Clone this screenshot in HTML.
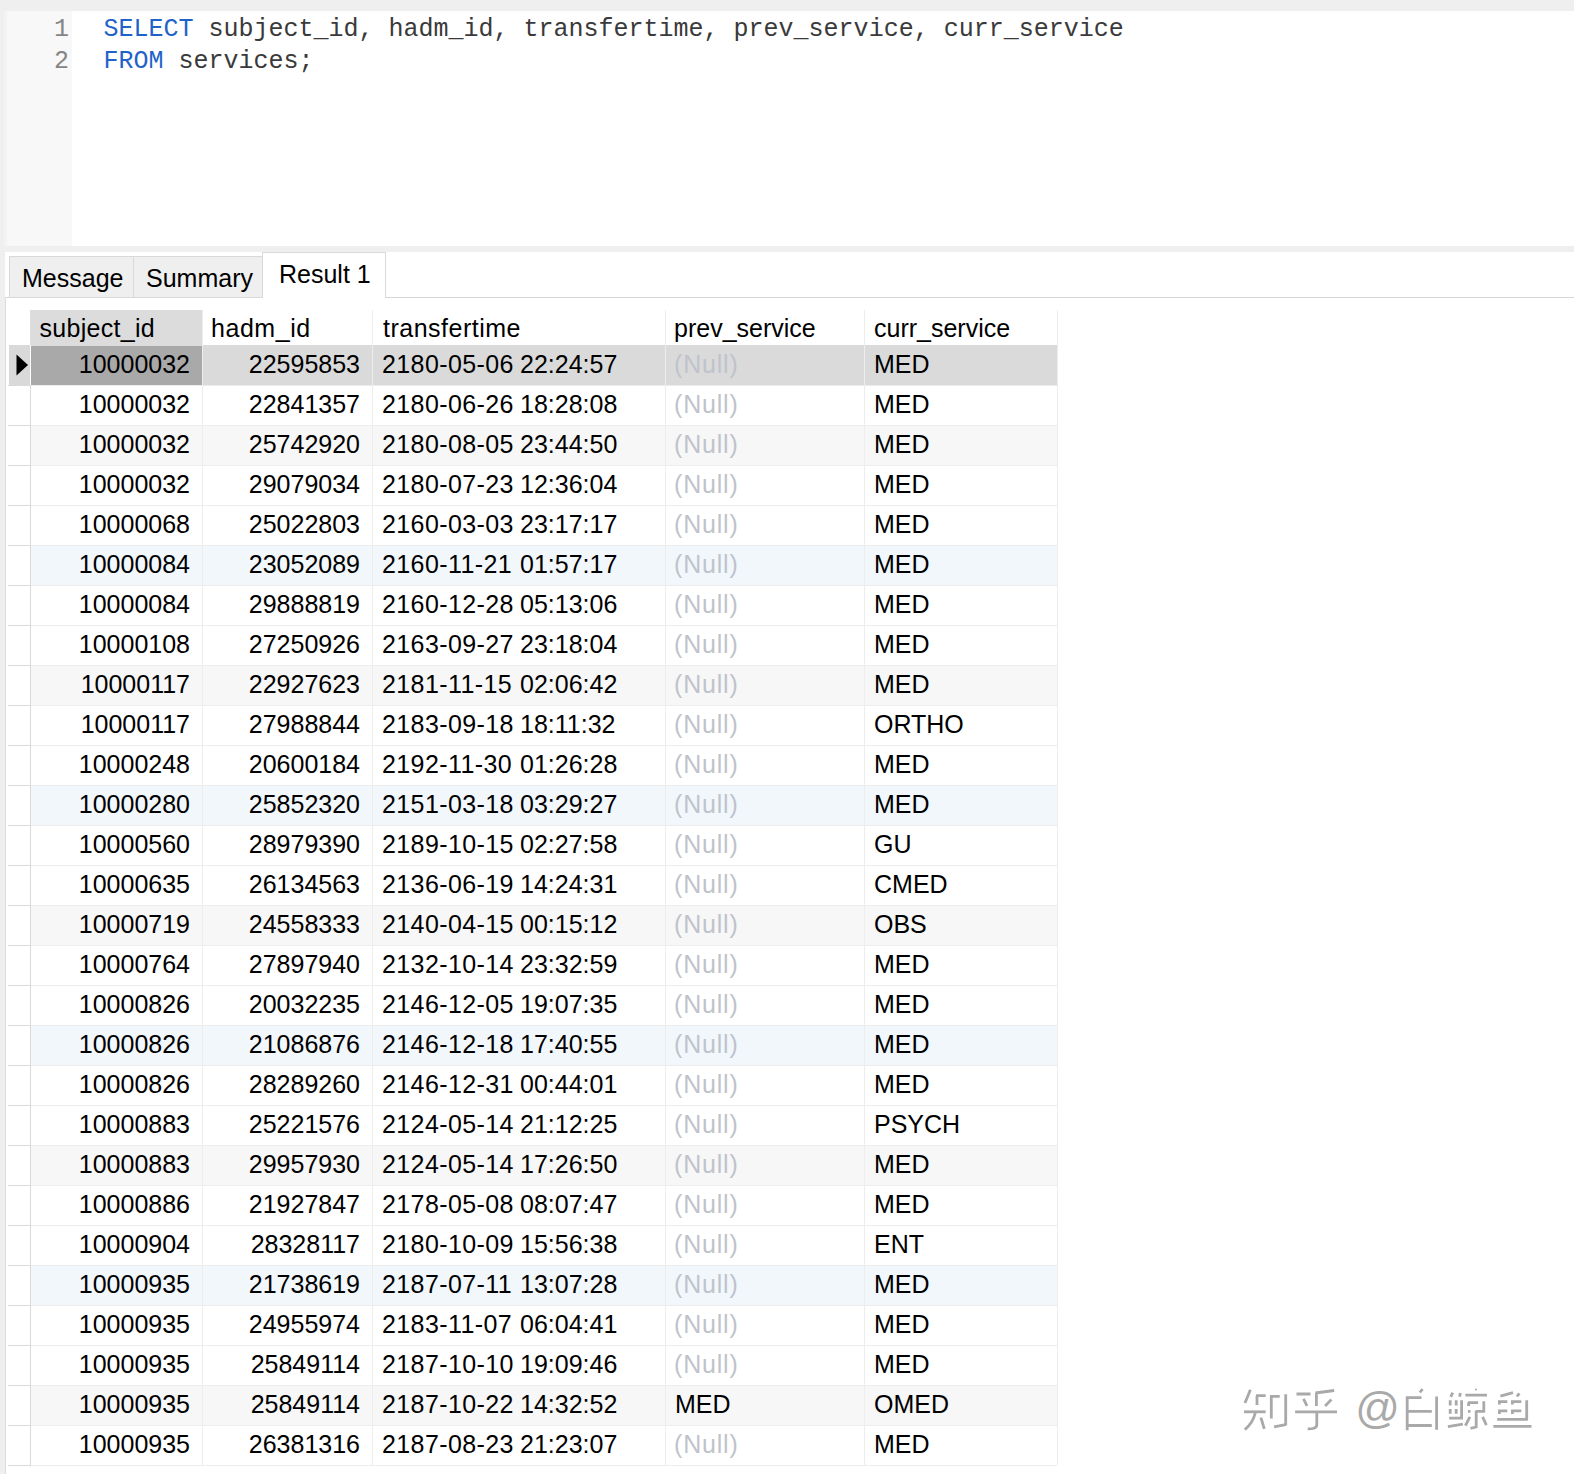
<!DOCTYPE html>
<html><head><meta charset="utf-8"><style>
*{margin:0;padding:0;box-sizing:border-box}
html,body{width:1574px;height:1474px;overflow:hidden;background:#fff}
body{position:relative;font-family:"Liberation Sans",sans-serif;}
.a{position:absolute}
.code{font-family:"Liberation Mono",monospace;font-size:25px;line-height:32px;white-space:pre;color:#3a3a3a}
.kw{color:#1f63c9}
.ln{font-family:"Liberation Mono",monospace;font-size:25px;line-height:32px;color:#858585;text-align:right}
.t{font-size:25px;line-height:40px;white-space:nowrap;color:#000}
.h{font-size:25px;line-height:35px;white-space:nowrap;color:#000}
.tab{font-size:25px;white-space:nowrap;color:#000}
.nul{color:#bfc3cc}
</style></head><body>
<div class="a" style="left:0;top:0;width:1574px;height:11px;background:#efefef"></div><div class="a" style="left:0;top:0;width:5px;height:1474px;background:#efefef"></div><div class="a" style="left:4px;top:11px;width:3px;height:235px;background:#f3f3f3"></div><div class="a" style="left:7px;top:11px;width:65px;height:235px;background:#f8f8f8"></div><div class="a" style="left:0;top:246px;width:1574px;height:6px;background:#efefef"></div><div class="a ln" style="left:20px;top:14px;width:49px">1<br>2</div><div class="a code" style="left:103.5px;top:14px"><span class="kw">SELECT</span> subject_id, hadm_id, transfertime, prev_service, curr_service
<span class="kw">FROM</span> services;</div><div class="a" style="left:5px;top:297px;width:1569px;height:1px;background:#d6d6d6"></div><div class="a" style="left:9px;top:256px;width:125px;height:42px;background:#efefef;border:1px solid #d9d9d9"></div><div class="a" style="left:133px;top:256px;width:130px;height:42px;background:#efefef;border:1px solid #d9d9d9"></div><div class="a" style="left:262px;top:252px;width:124px;height:46px;background:#fff;border:1px solid #d9d9d9;border-bottom:none"></div><div class="a tab" style="left:22px;top:264px">Message</div><div class="a tab" style="left:146px;top:264px">Summary</div><div class="a tab" style="left:279px;top:260px">Result 1</div><div class="a" style="left:5px;top:297px;width:1px;height:1177px;background:#dcdcdc"></div><div class="a" style="left:30px;top:310px;width:173px;height:35px;background:#dcdcdc"></div><div class="a h" style="left:39.5px;top:311px;letter-spacing:0.3px">subject_id</div><div class="a h" style="left:211px;top:311px;letter-spacing:0.55px">hadm_id</div><div class="a h" style="left:383px;top:311px;letter-spacing:0.5px">transfertime</div><div class="a h" style="left:674px;top:311px;letter-spacing:0px">prev_service</div><div class="a h" style="left:874px;top:311px;letter-spacing:0px">curr_service</div><div class="a" style="left:9px;top:345px;width:21px;height:40px;background:#d9d9d9"></div><div class="a" style="left:31px;top:345px;width:1026px;height:40px;background:#dadada"></div><div class="a" style="left:31px;top:346px;width:171px;height:39px;background:#a9a9a9"></div><div class="a" style="left:31px;top:425px;width:1026px;height:40px;background:#f7f7f7"></div><div class="a" style="left:31px;top:545px;width:1026px;height:40px;background:#f2f7fc"></div><div class="a" style="left:31px;top:665px;width:1026px;height:40px;background:#f7f7f7"></div><div class="a" style="left:31px;top:785px;width:1026px;height:40px;background:#f2f7fc"></div><div class="a" style="left:31px;top:905px;width:1026px;height:40px;background:#f7f7f7"></div><div class="a" style="left:31px;top:1025px;width:1026px;height:40px;background:#f2f7fc"></div><div class="a" style="left:31px;top:1145px;width:1026px;height:40px;background:#f7f7f7"></div><div class="a" style="left:31px;top:1265px;width:1026px;height:40px;background:#f2f7fc"></div><div class="a" style="left:31px;top:1385px;width:1026px;height:40px;background:#f7f7f7"></div><div class="a" style="left:8px;top:385px;width:22px;height:1px;background:#dadada"></div><div class="a" style="left:31px;top:385px;width:1026px;height:1px;background:#ededed"></div><div class="a" style="left:8px;top:425px;width:22px;height:1px;background:#dadada"></div><div class="a" style="left:31px;top:425px;width:1026px;height:1px;background:#ededed"></div><div class="a" style="left:8px;top:465px;width:22px;height:1px;background:#dadada"></div><div class="a" style="left:31px;top:465px;width:1026px;height:1px;background:#ededed"></div><div class="a" style="left:8px;top:505px;width:22px;height:1px;background:#dadada"></div><div class="a" style="left:31px;top:505px;width:1026px;height:1px;background:#ededed"></div><div class="a" style="left:8px;top:545px;width:22px;height:1px;background:#dadada"></div><div class="a" style="left:31px;top:545px;width:1026px;height:1px;background:#ededed"></div><div class="a" style="left:8px;top:585px;width:22px;height:1px;background:#dadada"></div><div class="a" style="left:31px;top:585px;width:1026px;height:1px;background:#ededed"></div><div class="a" style="left:8px;top:625px;width:22px;height:1px;background:#dadada"></div><div class="a" style="left:31px;top:625px;width:1026px;height:1px;background:#ededed"></div><div class="a" style="left:8px;top:665px;width:22px;height:1px;background:#dadada"></div><div class="a" style="left:31px;top:665px;width:1026px;height:1px;background:#ededed"></div><div class="a" style="left:8px;top:705px;width:22px;height:1px;background:#dadada"></div><div class="a" style="left:31px;top:705px;width:1026px;height:1px;background:#ededed"></div><div class="a" style="left:8px;top:745px;width:22px;height:1px;background:#dadada"></div><div class="a" style="left:31px;top:745px;width:1026px;height:1px;background:#ededed"></div><div class="a" style="left:8px;top:785px;width:22px;height:1px;background:#dadada"></div><div class="a" style="left:31px;top:785px;width:1026px;height:1px;background:#ededed"></div><div class="a" style="left:8px;top:825px;width:22px;height:1px;background:#dadada"></div><div class="a" style="left:31px;top:825px;width:1026px;height:1px;background:#ededed"></div><div class="a" style="left:8px;top:865px;width:22px;height:1px;background:#dadada"></div><div class="a" style="left:31px;top:865px;width:1026px;height:1px;background:#ededed"></div><div class="a" style="left:8px;top:905px;width:22px;height:1px;background:#dadada"></div><div class="a" style="left:31px;top:905px;width:1026px;height:1px;background:#ededed"></div><div class="a" style="left:8px;top:945px;width:22px;height:1px;background:#dadada"></div><div class="a" style="left:31px;top:945px;width:1026px;height:1px;background:#ededed"></div><div class="a" style="left:8px;top:985px;width:22px;height:1px;background:#dadada"></div><div class="a" style="left:31px;top:985px;width:1026px;height:1px;background:#ededed"></div><div class="a" style="left:8px;top:1025px;width:22px;height:1px;background:#dadada"></div><div class="a" style="left:31px;top:1025px;width:1026px;height:1px;background:#ededed"></div><div class="a" style="left:8px;top:1065px;width:22px;height:1px;background:#dadada"></div><div class="a" style="left:31px;top:1065px;width:1026px;height:1px;background:#ededed"></div><div class="a" style="left:8px;top:1105px;width:22px;height:1px;background:#dadada"></div><div class="a" style="left:31px;top:1105px;width:1026px;height:1px;background:#ededed"></div><div class="a" style="left:8px;top:1145px;width:22px;height:1px;background:#dadada"></div><div class="a" style="left:31px;top:1145px;width:1026px;height:1px;background:#ededed"></div><div class="a" style="left:8px;top:1185px;width:22px;height:1px;background:#dadada"></div><div class="a" style="left:31px;top:1185px;width:1026px;height:1px;background:#ededed"></div><div class="a" style="left:8px;top:1225px;width:22px;height:1px;background:#dadada"></div><div class="a" style="left:31px;top:1225px;width:1026px;height:1px;background:#ededed"></div><div class="a" style="left:8px;top:1265px;width:22px;height:1px;background:#dadada"></div><div class="a" style="left:31px;top:1265px;width:1026px;height:1px;background:#ededed"></div><div class="a" style="left:8px;top:1305px;width:22px;height:1px;background:#dadada"></div><div class="a" style="left:31px;top:1305px;width:1026px;height:1px;background:#ededed"></div><div class="a" style="left:8px;top:1345px;width:22px;height:1px;background:#dadada"></div><div class="a" style="left:31px;top:1345px;width:1026px;height:1px;background:#ededed"></div><div class="a" style="left:8px;top:1385px;width:22px;height:1px;background:#dadada"></div><div class="a" style="left:31px;top:1385px;width:1026px;height:1px;background:#ededed"></div><div class="a" style="left:8px;top:1425px;width:22px;height:1px;background:#dadada"></div><div class="a" style="left:31px;top:1425px;width:1026px;height:1px;background:#ededed"></div><div class="a" style="left:8px;top:1465px;width:22px;height:1px;background:#dadada"></div><div class="a" style="left:31px;top:1465px;width:1026px;height:1px;background:#ededed"></div><div class="a" style="left:202px;top:310px;width:1px;height:1155px;background:#ededed"></div><div class="a" style="left:372px;top:310px;width:1px;height:1155px;background:#ededed"></div><div class="a" style="left:665px;top:310px;width:1px;height:1155px;background:#ededed"></div><div class="a" style="left:864px;top:310px;width:1px;height:1155px;background:#ededed"></div><div class="a" style="left:1057px;top:310px;width:1px;height:1155px;background:#ededed"></div><div class="a t" style="left:30px;top:344px;width:160px;text-align:right">10000032</div><div class="a t" style="left:202px;top:344px;width:158px;text-align:right">22595853</div><div class="a t" style="left:382px;top:344px;letter-spacing:0.4px">2180-05-06</div><div class="a t" style="left:520px;top:344px;letter-spacing:0px">22:24:57</div><div class="a t nul" style="left:674px;top:344px;letter-spacing:0.8px">(Null)</div><div class="a t" style="left:874px;top:344px">MED</div><div class="a t" style="left:30px;top:384px;width:160px;text-align:right">10000032</div><div class="a t" style="left:202px;top:384px;width:158px;text-align:right">22841357</div><div class="a t" style="left:382px;top:384px;letter-spacing:0.4px">2180-06-26</div><div class="a t" style="left:520px;top:384px;letter-spacing:0px">18:28:08</div><div class="a t nul" style="left:674px;top:384px;letter-spacing:0.8px">(Null)</div><div class="a t" style="left:874px;top:384px">MED</div><div class="a t" style="left:30px;top:424px;width:160px;text-align:right">10000032</div><div class="a t" style="left:202px;top:424px;width:158px;text-align:right">25742920</div><div class="a t" style="left:382px;top:424px;letter-spacing:0.4px">2180-08-05</div><div class="a t" style="left:520px;top:424px;letter-spacing:0px">23:44:50</div><div class="a t nul" style="left:674px;top:424px;letter-spacing:0.8px">(Null)</div><div class="a t" style="left:874px;top:424px">MED</div><div class="a t" style="left:30px;top:464px;width:160px;text-align:right">10000032</div><div class="a t" style="left:202px;top:464px;width:158px;text-align:right">29079034</div><div class="a t" style="left:382px;top:464px;letter-spacing:0.4px">2180-07-23</div><div class="a t" style="left:520px;top:464px;letter-spacing:0px">12:36:04</div><div class="a t nul" style="left:674px;top:464px;letter-spacing:0.8px">(Null)</div><div class="a t" style="left:874px;top:464px">MED</div><div class="a t" style="left:30px;top:504px;width:160px;text-align:right">10000068</div><div class="a t" style="left:202px;top:504px;width:158px;text-align:right">25022803</div><div class="a t" style="left:382px;top:504px;letter-spacing:0.4px">2160-03-03</div><div class="a t" style="left:520px;top:504px;letter-spacing:0px">23:17:17</div><div class="a t nul" style="left:674px;top:504px;letter-spacing:0.8px">(Null)</div><div class="a t" style="left:874px;top:504px">MED</div><div class="a t" style="left:30px;top:544px;width:160px;text-align:right">10000084</div><div class="a t" style="left:202px;top:544px;width:158px;text-align:right">23052089</div><div class="a t" style="left:382px;top:544px;letter-spacing:0.4px">2160-11-21</div><div class="a t" style="left:520px;top:544px;letter-spacing:0px">01:57:17</div><div class="a t nul" style="left:674px;top:544px;letter-spacing:0.8px">(Null)</div><div class="a t" style="left:874px;top:544px">MED</div><div class="a t" style="left:30px;top:584px;width:160px;text-align:right">10000084</div><div class="a t" style="left:202px;top:584px;width:158px;text-align:right">29888819</div><div class="a t" style="left:382px;top:584px;letter-spacing:0.4px">2160-12-28</div><div class="a t" style="left:520px;top:584px;letter-spacing:0px">05:13:06</div><div class="a t nul" style="left:674px;top:584px;letter-spacing:0.8px">(Null)</div><div class="a t" style="left:874px;top:584px">MED</div><div class="a t" style="left:30px;top:624px;width:160px;text-align:right">10000108</div><div class="a t" style="left:202px;top:624px;width:158px;text-align:right">27250926</div><div class="a t" style="left:382px;top:624px;letter-spacing:0.4px">2163-09-27</div><div class="a t" style="left:520px;top:624px;letter-spacing:0px">23:18:04</div><div class="a t nul" style="left:674px;top:624px;letter-spacing:0.8px">(Null)</div><div class="a t" style="left:874px;top:624px">MED</div><div class="a t" style="left:30px;top:664px;width:160px;text-align:right">10000117</div><div class="a t" style="left:202px;top:664px;width:158px;text-align:right">22927623</div><div class="a t" style="left:382px;top:664px;letter-spacing:0.4px">2181-11-15</div><div class="a t" style="left:520px;top:664px;letter-spacing:0px">02:06:42</div><div class="a t nul" style="left:674px;top:664px;letter-spacing:0.8px">(Null)</div><div class="a t" style="left:874px;top:664px">MED</div><div class="a t" style="left:30px;top:704px;width:160px;text-align:right">10000117</div><div class="a t" style="left:202px;top:704px;width:158px;text-align:right">27988844</div><div class="a t" style="left:382px;top:704px;letter-spacing:0.4px">2183-09-18</div><div class="a t" style="left:520px;top:704px;letter-spacing:0px">18:11:32</div><div class="a t nul" style="left:674px;top:704px;letter-spacing:0.8px">(Null)</div><div class="a t" style="left:874px;top:704px">ORTHO</div><div class="a t" style="left:30px;top:744px;width:160px;text-align:right">10000248</div><div class="a t" style="left:202px;top:744px;width:158px;text-align:right">20600184</div><div class="a t" style="left:382px;top:744px;letter-spacing:0.4px">2192-11-30</div><div class="a t" style="left:520px;top:744px;letter-spacing:0px">01:26:28</div><div class="a t nul" style="left:674px;top:744px;letter-spacing:0.8px">(Null)</div><div class="a t" style="left:874px;top:744px">MED</div><div class="a t" style="left:30px;top:784px;width:160px;text-align:right">10000280</div><div class="a t" style="left:202px;top:784px;width:158px;text-align:right">25852320</div><div class="a t" style="left:382px;top:784px;letter-spacing:0.4px">2151-03-18</div><div class="a t" style="left:520px;top:784px;letter-spacing:0px">03:29:27</div><div class="a t nul" style="left:674px;top:784px;letter-spacing:0.8px">(Null)</div><div class="a t" style="left:874px;top:784px">MED</div><div class="a t" style="left:30px;top:824px;width:160px;text-align:right">10000560</div><div class="a t" style="left:202px;top:824px;width:158px;text-align:right">28979390</div><div class="a t" style="left:382px;top:824px;letter-spacing:0.4px">2189-10-15</div><div class="a t" style="left:520px;top:824px;letter-spacing:0px">02:27:58</div><div class="a t nul" style="left:674px;top:824px;letter-spacing:0.8px">(Null)</div><div class="a t" style="left:874px;top:824px">GU</div><div class="a t" style="left:30px;top:864px;width:160px;text-align:right">10000635</div><div class="a t" style="left:202px;top:864px;width:158px;text-align:right">26134563</div><div class="a t" style="left:382px;top:864px;letter-spacing:0.4px">2136-06-19</div><div class="a t" style="left:520px;top:864px;letter-spacing:0px">14:24:31</div><div class="a t nul" style="left:674px;top:864px;letter-spacing:0.8px">(Null)</div><div class="a t" style="left:874px;top:864px">CMED</div><div class="a t" style="left:30px;top:904px;width:160px;text-align:right">10000719</div><div class="a t" style="left:202px;top:904px;width:158px;text-align:right">24558333</div><div class="a t" style="left:382px;top:904px;letter-spacing:0.4px">2140-04-15</div><div class="a t" style="left:520px;top:904px;letter-spacing:0px">00:15:12</div><div class="a t nul" style="left:674px;top:904px;letter-spacing:0.8px">(Null)</div><div class="a t" style="left:874px;top:904px">OBS</div><div class="a t" style="left:30px;top:944px;width:160px;text-align:right">10000764</div><div class="a t" style="left:202px;top:944px;width:158px;text-align:right">27897940</div><div class="a t" style="left:382px;top:944px;letter-spacing:0.4px">2132-10-14</div><div class="a t" style="left:520px;top:944px;letter-spacing:0px">23:32:59</div><div class="a t nul" style="left:674px;top:944px;letter-spacing:0.8px">(Null)</div><div class="a t" style="left:874px;top:944px">MED</div><div class="a t" style="left:30px;top:984px;width:160px;text-align:right">10000826</div><div class="a t" style="left:202px;top:984px;width:158px;text-align:right">20032235</div><div class="a t" style="left:382px;top:984px;letter-spacing:0.4px">2146-12-05</div><div class="a t" style="left:520px;top:984px;letter-spacing:0px">19:07:35</div><div class="a t nul" style="left:674px;top:984px;letter-spacing:0.8px">(Null)</div><div class="a t" style="left:874px;top:984px">MED</div><div class="a t" style="left:30px;top:1024px;width:160px;text-align:right">10000826</div><div class="a t" style="left:202px;top:1024px;width:158px;text-align:right">21086876</div><div class="a t" style="left:382px;top:1024px;letter-spacing:0.4px">2146-12-18</div><div class="a t" style="left:520px;top:1024px;letter-spacing:0px">17:40:55</div><div class="a t nul" style="left:674px;top:1024px;letter-spacing:0.8px">(Null)</div><div class="a t" style="left:874px;top:1024px">MED</div><div class="a t" style="left:30px;top:1064px;width:160px;text-align:right">10000826</div><div class="a t" style="left:202px;top:1064px;width:158px;text-align:right">28289260</div><div class="a t" style="left:382px;top:1064px;letter-spacing:0.4px">2146-12-31</div><div class="a t" style="left:520px;top:1064px;letter-spacing:0px">00:44:01</div><div class="a t nul" style="left:674px;top:1064px;letter-spacing:0.8px">(Null)</div><div class="a t" style="left:874px;top:1064px">MED</div><div class="a t" style="left:30px;top:1104px;width:160px;text-align:right">10000883</div><div class="a t" style="left:202px;top:1104px;width:158px;text-align:right">25221576</div><div class="a t" style="left:382px;top:1104px;letter-spacing:0.4px">2124-05-14</div><div class="a t" style="left:520px;top:1104px;letter-spacing:0px">21:12:25</div><div class="a t nul" style="left:674px;top:1104px;letter-spacing:0.8px">(Null)</div><div class="a t" style="left:874px;top:1104px">PSYCH</div><div class="a t" style="left:30px;top:1144px;width:160px;text-align:right">10000883</div><div class="a t" style="left:202px;top:1144px;width:158px;text-align:right">29957930</div><div class="a t" style="left:382px;top:1144px;letter-spacing:0.4px">2124-05-14</div><div class="a t" style="left:520px;top:1144px;letter-spacing:0px">17:26:50</div><div class="a t nul" style="left:674px;top:1144px;letter-spacing:0.8px">(Null)</div><div class="a t" style="left:874px;top:1144px">MED</div><div class="a t" style="left:30px;top:1184px;width:160px;text-align:right">10000886</div><div class="a t" style="left:202px;top:1184px;width:158px;text-align:right">21927847</div><div class="a t" style="left:382px;top:1184px;letter-spacing:0.4px">2178-05-08</div><div class="a t" style="left:520px;top:1184px;letter-spacing:0px">08:07:47</div><div class="a t nul" style="left:674px;top:1184px;letter-spacing:0.8px">(Null)</div><div class="a t" style="left:874px;top:1184px">MED</div><div class="a t" style="left:30px;top:1224px;width:160px;text-align:right">10000904</div><div class="a t" style="left:202px;top:1224px;width:158px;text-align:right">28328117</div><div class="a t" style="left:382px;top:1224px;letter-spacing:0.4px">2180-10-09</div><div class="a t" style="left:520px;top:1224px;letter-spacing:0px">15:56:38</div><div class="a t nul" style="left:674px;top:1224px;letter-spacing:0.8px">(Null)</div><div class="a t" style="left:874px;top:1224px">ENT</div><div class="a t" style="left:30px;top:1264px;width:160px;text-align:right">10000935</div><div class="a t" style="left:202px;top:1264px;width:158px;text-align:right">21738619</div><div class="a t" style="left:382px;top:1264px;letter-spacing:0.4px">2187-07-11</div><div class="a t" style="left:520px;top:1264px;letter-spacing:0px">13:07:28</div><div class="a t nul" style="left:674px;top:1264px;letter-spacing:0.8px">(Null)</div><div class="a t" style="left:874px;top:1264px">MED</div><div class="a t" style="left:30px;top:1304px;width:160px;text-align:right">10000935</div><div class="a t" style="left:202px;top:1304px;width:158px;text-align:right">24955974</div><div class="a t" style="left:382px;top:1304px;letter-spacing:0.4px">2183-11-07</div><div class="a t" style="left:520px;top:1304px;letter-spacing:0px">06:04:41</div><div class="a t nul" style="left:674px;top:1304px;letter-spacing:0.8px">(Null)</div><div class="a t" style="left:874px;top:1304px">MED</div><div class="a t" style="left:30px;top:1344px;width:160px;text-align:right">10000935</div><div class="a t" style="left:202px;top:1344px;width:158px;text-align:right">25849114</div><div class="a t" style="left:382px;top:1344px;letter-spacing:0.4px">2187-10-10</div><div class="a t" style="left:520px;top:1344px;letter-spacing:0px">19:09:46</div><div class="a t nul" style="left:674px;top:1344px;letter-spacing:0.8px">(Null)</div><div class="a t" style="left:874px;top:1344px">MED</div><div class="a t" style="left:30px;top:1384px;width:160px;text-align:right">10000935</div><div class="a t" style="left:202px;top:1384px;width:158px;text-align:right">25849114</div><div class="a t" style="left:382px;top:1384px;letter-spacing:0.4px">2187-10-22</div><div class="a t" style="left:520px;top:1384px;letter-spacing:0px">14:32:52</div><div class="a t" style="left:675px;top:1384px">MED</div><div class="a t" style="left:874px;top:1384px">OMED</div><div class="a t" style="left:30px;top:1424px;width:160px;text-align:right">10000935</div><div class="a t" style="left:202px;top:1424px;width:158px;text-align:right">26381316</div><div class="a t" style="left:382px;top:1424px;letter-spacing:0.4px">2187-08-23</div><div class="a t" style="left:520px;top:1424px;letter-spacing:0px">21:23:07</div><div class="a t nul" style="left:674px;top:1424px;letter-spacing:0.8px">(Null)</div><div class="a t" style="left:874px;top:1424px">MED</div><div class="a" style="left:30px;top:385px;width:1px;height:1081px;background:#d9d9d9"></div><svg class="a" style="left:14px;top:354px" width="16" height="22"><path d="M2.5 0.5 L14 11 L2.5 21.5 Z" fill="#000"/></svg><svg class="a" style="left:1230px;top:1380px" width="320" height="60" viewBox="1230 1380 320 60"><g fill="none" stroke="#a9a9a9" stroke-width="2.8" stroke-linecap="butt">
<path d="M1250.4 1389.8 L1245 1403"/>
<path d="M1256 1395.7 H1265.7 M1257 1395.7 V1405"/>
<path d="M1244 1411.8 H1265.7"/>
<path d="M1255.3 1412.8 Q1253 1423 1244.8 1429.6"/>
<path d="M1260.9 1417.7 L1264.3 1428.9"/>
<path d="M1271.3 1395 V1418.4 M1271.3 1396.4 H1279.7 M1285.7 1394.3 V1425.4 M1274.1 1426.8 L1285.7 1424.7"/>
<path d="M1315.4 1393 L1334.2 1390.5 M1296.5 1394 H1310.5 M1316.4 1393 V1405.9 M1303.5 1398.9 L1307 1405.9 M1331.4 1399.6 L1325.1 1405.9"/>
<path d="M1295.1 1411.8 H1337 M1316.8 1412.8 V1424.7 Q1316.8 1429 1307.7 1428.9"/>
<path d="M1421.5 1397.7 H1407.2 V1430.3 M1407.2 1411.4 H1431.8 M1407.2 1425.5 H1431.8 M1436.6 1396.6 V1429.7 M1422.6 1389.1 L1419.8 1392.3"/>
<path d="M1452.7 1392.7 L1450.8 1396.8 M1460.3 1393 L1459.7 1396.8"/>
<path d="M1450.2 1400.3 V1405.4 M1450.2 1408.9 V1413.7 M1456.2 1400.3 V1405.4 M1456.2 1408.9 V1413.7 M1461.6 1400.3 V1419.4 M1449.2 1418.1 H1462.9 M1447.9 1426.7 L1462.9 1424.2"/>
<path d="M1465.4 1395.2 H1487 M1468 1402.6 H1478.1 M1468.6 1402.6 V1406 M1483.8 1401.3 V1412.4 M1468 1411.4 H1470.5 M1475.5 1411.4 H1484.5 M1476.2 1411.1 V1427 L1470.5 1428.3 M1469.9 1416.8 L1465.4 1425.7 M1482.6 1416.8 L1486.4 1425.1"/>
<circle cx="1475.9" cy="1389.5" r="1" fill="#a9a9a9" stroke="none"/>
<path d="M1500.4 1396.2 L1513 1392.7 M1519.4 1393.3 L1516.9 1396.5"/>
<path d="M1499.4 1400.3 V1404.5 M1499.4 1409.5 V1414 M1498.5 1401.6 H1507.3 M1511.2 1401.6 H1521.3 M1498.5 1410.8 H1507.3 M1511.2 1410.8 H1521.3 M1512.4 1400.3 V1404.5 M1512.4 1409.5 V1414 M1526.7 1400.3 V1420.3 M1497.2 1419.4 H1527.7 M1493.4 1426.4 H1531.5"/>
</g>
<text x="1377.5" y="1422.5" font-family="Liberation Sans" font-size="44" fill="#a9a9a9" text-anchor="middle">@</text>
</svg>

</body></html>
